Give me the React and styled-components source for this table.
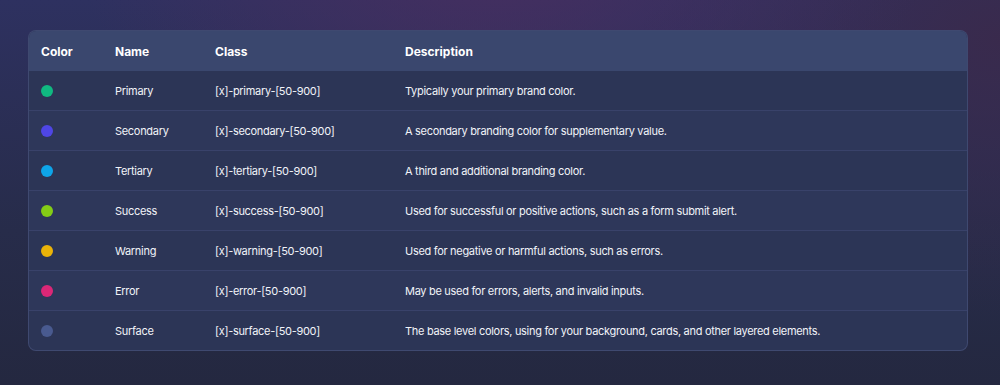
import React from "react";
import styled, { createGlobalStyle } from "styled-components";

const GlobalStyle = createGlobalStyle`
  html, body {
    margin: 0;
    height: 385px;
    overflow: hidden;
  }
  body {
    font-family: Inter, "Noto Sans", sans-serif;
    background:
      radial-gradient(ellipse 60% 80% at 50% -10%, rgba(74, 46, 96, 0.85), transparent 70%),
      radial-gradient(ellipse 45% 90% at 100% 10%, rgba(58, 42, 76, 0.95), transparent 80%),
      linear-gradient(180deg, #2e3160 0%, #272c4a 60%, #242840 100%);
    color: #fff;
    -webkit-font-smoothing: antialiased;
  }
`;

const Page = styled.div`
  padding: 30px 32px 0 28px;
`;

const Card = styled.div`
  border: 1px solid rgba(100, 112, 160, 0.35);
  border-radius: 8px;
  overflow: hidden;
  background: #2c3556;
`;

const Table = styled.table`
  width: 100%;
  border-collapse: collapse;
  table-layout: fixed;
`;

const Th = styled.th`
  text-align: left;
  font-size: 12px;
  font-weight: 700;
  height: 40px;
  padding: 0 12px;
  background: #3a476e;
  width: ${(p) => p.$w || "auto"};
`;

const Tr = styled.tr`
  border-top: 1px solid #39426a;
  &:first-child {
    border-top: none;
  }
  &:nth-child(even) {
    background: #2e375a;
  }
`;

const Td = styled.td`
  font-size: 11px;
  letter-spacing: -0.3px;
  height: 39px;
  padding: 0 12px;
  white-space: nowrap;
  color: #f1f3f8;
`;

const Dot = styled.span`
  display: block;
  width: 12px;
  height: 12px;
  border-radius: 50%;
  background: ${(p) => p.$color};
`;

const colors = [
  ["#10b981", "Primary", "primary", "Typically your primary brand color."],
  ["#4f46e5", "Secondary", "secondary", "A secondary branding color for supplementary value."],
  ["#0ea5e9", "Tertiary", "tertiary", "A third and additional branding color."],
  ["#84cc16", "Success", "success", "Used for successful or positive actions, such as a form submit alert."],
  ["#eab308", "Warning", "warning", "Used for negative or harmful actions, such as errors."],
  ["#db2777", "Error", "error", "May be used for errors, alerts, and invalid inputs."],
  ["#495a8f", "Surface", "surface", "The base level colors, using for your background, cards, and other layered elements."],
];

const App = () => {
  return (
    <>
      <GlobalStyle />
      <Page>
        <Card>
          <Table>
            <thead>
              <tr>
                <Th $w="50px">Color</Th>
                <Th $w="76px">Name</Th>
                <Th $w="166px">Class</Th>
                <Th>Description</Th>
              </tr>
            </thead>
            <tbody>
              {colors.map(([hex, name, key, desc]) => (
                <Tr key={key}>
                  <Td>
                    <Dot $color={hex} />
                  </Td>
                  <Td>{name}</Td>
                  <Td>[x]-{key}-[50-900]</Td>
                  <Td>{desc}</Td>
                </Tr>
              ))}
            </tbody>
          </Table>
        </Card>
      </Page>
    </>
  );
};

export default App;
